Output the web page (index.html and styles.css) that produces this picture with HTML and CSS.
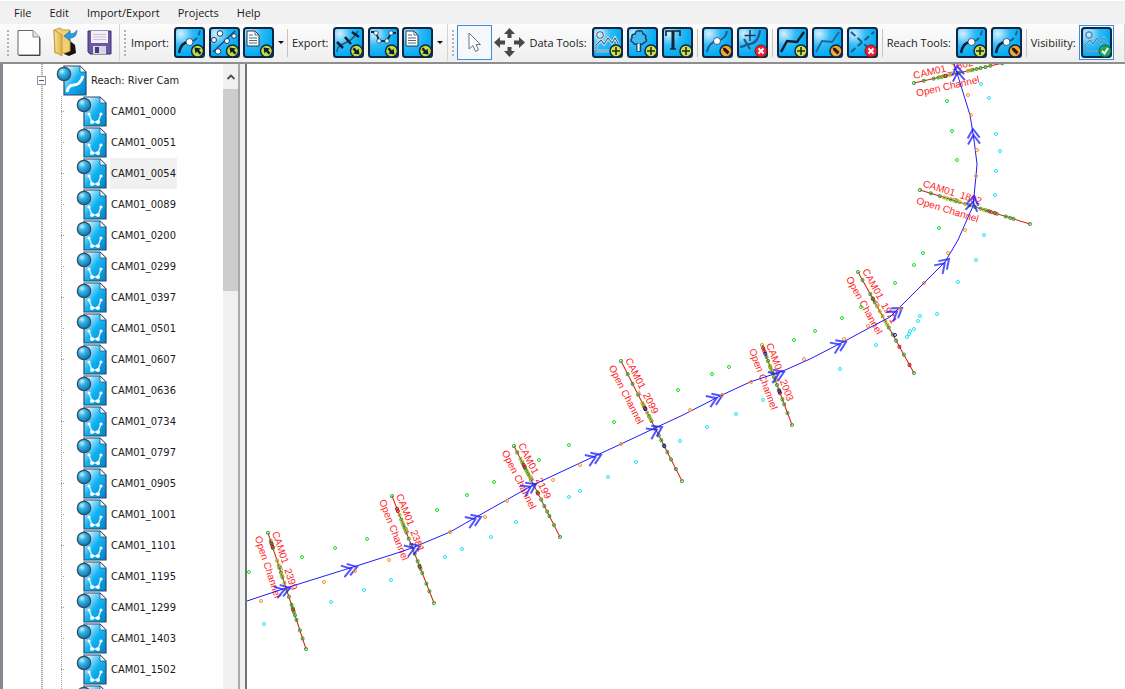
FILE: index.html
```html
<!DOCTYPE html>
<html lang="en">
<head>
    <meta charset="UTF-8">
    <meta name="viewport" content="width=device-width, initial-scale=1.0">
    <title>River Cam</title>
    <link rel="stylesheet" href="styles.css">
</head>
<body>
    <!-- shared icon parts -->
    <svg class="defs" width="0" height="0" aria-hidden="true">
        <defs>
            <radialGradient id="sky" cx="0.2" cy="0.2" r="0.8">
                <stop offset="0" stop-color="#d4efff"/>
                <stop offset="0.5" stop-color="#30bbf7"/>
                <stop offset="1" stop-color="#00aaf0"/>
            </radialGradient>
            <linearGradient id="sheet" x1="0" y1="0" x2="1" y2="1">
                <stop offset="0.1" stop-color="#dff5ff"/>
                <stop offset="0.5" stop-color="#12b4f4"/>
                <stop offset="1" stop-color="#0080c8"/>
            </linearGradient>
            <radialGradient id="ball" cx="0.35" cy="0.3" r="0.7">
                <stop offset="0" stop-color="#c9f0ff"/>
                <stop offset="0.4" stop-color="#35b4e6"/>
                <stop offset="1" stop-color="#0a78b4"/>
            </radialGradient>
            <linearGradient id="folder" x1="0" y1="0" x2="1" y2="0">
                <stop offset="0" stop-color="#f9e49a"/>
                <stop offset="1" stop-color="#dcb146"/>
            </linearGradient>
            <symbol id="tile" viewBox="0 0 31 31">
                <rect x="1" y="1" width="29" height="29" rx="2.5" fill="url(#sky)" stroke="#0c2748" stroke-width="2"/>
            </symbol>
            <symbol id="badge-cursor" viewBox="0 0 31 31">
                <circle cx="23.5" cy="24" r="6" fill="#c8dc3c" stroke="#0c2748" stroke-width="1.5"/>
                <path d="M20.500 20.500l6.500 1 -2 1.500 2.500 3 -2 1.500 -2.500 -3 -1.500 2z" fill="#0c1e30"/>
            </symbol>
            <symbol id="badge-out" viewBox="0 0 31 31">
                <circle cx="23.5" cy="24" r="6" fill="#c8dc3c" stroke="#0c2748" stroke-width="1.5"/>
                <path d="M26.500 27.500l-6.500 -1 2 -1.500 -2.500 -3 2 -1.500 2.500 3 1.500 -2z" fill="#0c1e30"/>
            </symbol>
            <symbol id="badge-add" viewBox="0 0 31 31">
                <circle cx="24" cy="24" r="6" fill="#d3e04a" stroke="#0c2748" stroke-width="1.5"/>
                <path d="M24 20v8M20 24h8" stroke="#1d2f1a" stroke-width="1.6"/>
            </symbol>
            <symbol id="badge-edit" viewBox="0 0 31 31">
                <circle cx="24" cy="24" r="6" fill="#f7a531" stroke="#0c2748" stroke-width="1.5"/>
                <path d="M20.500 20.500l3 .5 4 4 -2 2.500 -4 -4z" fill="#2b1a08"/>
            </symbol>
            <symbol id="badge-delete" viewBox="0 0 31 31">
                <circle cx="24" cy="24" r="6" fill="#ec2230" stroke="#7c1420" stroke-width="1"/>
                <path d="M21.500 21.500l5 5M26.500 21.500l-5 5" stroke="#fff" stroke-width="2"/>
            </symbol>
            <symbol id="badge-ok" viewBox="0 0 31 31">
                <circle cx="24" cy="24" r="6" fill="#25a558" stroke="#0f5f40" stroke-width="1"/>
                <path d="M21 24l2.500 2.500 3.500 -5.500" fill="none" stroke="#fff" stroke-width="1.800"/>
            </symbol>
            <symbol id="page-lines" viewBox="0 0 31 31">
                <path d="M4 4h8l4 4v11h-12z" fill="#fff" stroke="#22384f"/>
                <path d="M12 4v4h4M6 8h4M6 11h8M6 13.500h8M6 16h8" fill="none" stroke="#52697f"/>
            </symbol>
            <symbol id="reach-curve" viewBox="0 0 31 31">
                <path d="M5 26Q7 15 15 15" fill="none" stroke="#0c1e30" stroke-width="2.500"/>
                <path d="M19 14Q25 11 26 3" fill="none" stroke="#1b5c8c" stroke-width="1.800" stroke-dasharray="5 3"/>
                <circle cx="15.500" cy="15" r="3.500" fill="#fff" stroke="#0c2748" stroke-width=".7"/>
            </symbol>
            <symbol id="landscape" viewBox="0 0 31 31">
                <circle cx="8" cy="8" r="3.200"/>
                <path d="M4 24V18L9 13l3 4 4-6 4 5 3-5 3 5v2M4 24h15"/>
            </symbol>
            <symbol id="node-section" viewBox="0 0 31 31">
                <path d="M8 1H24L30 7V30H8z" fill="url(#sheet)" stroke="#2c4a68" stroke-width="1.200"/>
                <path d="M24 1V7H30z" fill="#eef6fb" stroke="#2c4a68" stroke-width=".7"/>
                <path d="M13 18l3 8h6l3-8" fill="none" stroke="#e4f8ff" stroke-width="1.400"/>
                <g fill="#fff"><circle cx="13" cy="18" r="1.600"/><circle cx="16" cy="26" r="2"/><circle cx="22" cy="26" r="2"/><circle cx="25" cy="18" r="1.600"/></g>
                <circle cx="8" cy="9" r="6.700" fill="url(#ball)" stroke="#3b4a5c" stroke-width="1.200"/>
            </symbol>
            <symbol id="node-reach" viewBox="0 0 31 31">
                <path d="M8 1H24L30 7V30H8z" fill="url(#sheet)" stroke="#2c4a68" stroke-width="1.200"/>
                <path d="M24 1V7H30z" fill="#eef6fb" stroke="#2c4a68" stroke-width=".7"/>
                <path d="M11 27Q12 20 18 20T27 11" fill="none" stroke="#fff" stroke-width="2.800"/>
                <circle cx="8" cy="9" r="6.700" fill="url(#ball)" stroke="#3b4a5c" stroke-width="1.200"/>
            </symbol>
        </defs>
    </svg>

    <div class="app">
        <nav class="menubar">
            <button>File</button>
            <button>Edit</button>
            <button>Import/Export</button>
            <button>Projects</button>
            <button>Help</button>
        </nav>

        <div class="toolbar">
            <div class="strip strip-file">
                <span class="grip"></span>
                <button class="tool" aria-label="New">
                    <svg viewBox="0 0 31 31"><path d="M4 3.500H19L25.500 10V28H4z" fill="#fdfdfd" stroke="#6a6a6a"/><path d="M19 3.500V10H25.500" fill="#e6e6e6" stroke="#8a8a8a"/><path d="M26 11V28.500H5" fill="none" stroke="#444"/></svg>
                </button>
                <button class="tool" aria-label="Open">
                    <svg viewBox="0 0 31 31"><path d="M20 13l6 5 1 8-7 3-5-2z" fill="#17140f"/><path d="M5 3l6-2 3 2h7v21l-5 2H6z" fill="#efd078" stroke="#c79b39"/><path d="M5 3l8 5v21l-7-4z" fill="url(#folder)" stroke="#c79b39"/><path d="M28 3q0 8-7 8v3l-6-5 6-5v3q5 0 7-4z" fill="#2d9be0" stroke="#1470b0" stroke-width=".6"/></svg>
                </button>
                <button class="tool" aria-label="Save">
                    <svg viewBox="0 0 31 31"><path d="M4 4H27V27H6L4 25z" fill="#6d55a8" stroke="#3f3468"/><path d="M7 4H24V16H7z" fill="#f3f1f8"/><path d="M9 7.500h13M9 10h13M9 12.500h13" stroke="#c9c4d8"/><path d="M9 19H22V27H9z" fill="#d7d5de"/><path d="M11 20H15V26H11z" fill="#4a3a7c"/></svg>
                </button>
            </div>

            <div class="strip">
                <span class="grip"></span>
                <span class="caption">Import:</span>
                <button class="tool" aria-label="Import reach">
                    <svg viewBox="0 0 31 31"><use href="#tile"/><use href="#reach-curve"/><use href="#badge-cursor"/></svg>
                </button>
                <button class="tool" aria-label="Import points">
                    <svg viewBox="0 0 31 31"><use href="#tile"/><path d="M4 25L26 4" stroke="#1b4c74" stroke-width="1.500"/><g fill="#fff" stroke="#1b3c5c"><circle cx="11" cy="6.500" r="2.800"/><circle cx="5" cy="13" r="2.500"/><circle cx="18" cy="14" r="2.500"/><circle cx="25" cy="9" r="2.300"/><circle cx="9" cy="24.500" r="2.800"/></g><use href="#badge-cursor"/></svg>
                </button>
                <button class="tool tool-menu" aria-label="Import file">
                    <svg viewBox="0 0 31 31"><use href="#tile"/><use href="#page-lines"/><use href="#badge-cursor"/></svg><i class="arrow"></i>
                </button>
                <span class="sep"></span>
                <span class="caption">Export:</span>
                <button class="tool" aria-label="Export sections">
                    <svg viewBox="0 0 31 31"><use href="#tile"/><path d="M4 25Q4 20 8 18T16 14T25 4" fill="none" stroke="#1b5c8c" stroke-width="1.500"/><path d="M4 15l6 6M12 10l6 7M19 5l7 5" stroke="#0c1e30" stroke-width="2.500"/><use href="#badge-out"/></svg>
                </button>
                <button class="tool" aria-label="Export cross section">
                    <svg viewBox="0 0 31 31"><use href="#tile"/><path d="M3 5h5l3 9h8l4-8h5" fill="none" stroke="#0c2748" stroke-width="1.800"/><g fill="#fff" stroke="#1b3c5c" stroke-width=".8"><circle cx="8" cy="6" r="2.200"/><circle cx="11" cy="14" r="2.200"/><circle cx="19" cy="14" r="2.200"/><circle cx="23" cy="6" r="2.200"/></g><use href="#badge-out"/></svg>
                </button>
                <button class="tool tool-menu" aria-label="Export file">
                    <svg viewBox="0 0 31 31"><use href="#tile"/><use href="#page-lines"/><use href="#badge-out"/></svg><i class="arrow"></i>
                </button>
            </div>

            <div class="strip strip-last">
                <span class="grip"></span>
                <button class="tool tool-on" aria-label="Select" aria-pressed="true">
                    <svg viewBox="0 0 31 31"><path d="M10 6V22L14 18.500L16.500 24.500L19.500 23L17 17.500H21.500z" fill="#fff" stroke="#6a7683"/></svg>
                </button>
                <button class="tool" aria-label="Pan">
                    <svg viewBox="0 0 31 31"><path d="M15.500 1L21 7H17.500V11H13.500V7H10zM15.500 30L21 24H17.500V20H13.500V24H10zM0 15.500L6 10V13.500H11V17.500H6V21zM31 15.500L25 10V13.500H20V17.500H25V21z" fill="#484848"/></svg>
                </button>
                <span class="caption">Data Tools:</span>
                <button class="tool" aria-label="Add image">
                    <svg viewBox="0 0 31 31"><use href="#tile"/><use href="#landscape" fill="none" stroke="#f4fbff" stroke-width="2.500"/><use href="#landscape" fill="none" stroke="#3f5a73" stroke-width="1.100"/><use href="#badge-add"/></svg>
                </button>
                <button class="tool" aria-label="Add tree">
                    <svg viewBox="0 0 31 31"><use href="#tile"/><path d="M10 24V17Q7 18 6 15.500Q2 14 5 11Q4 7 8 7Q9 3 12 4Q16 3 16 7Q20 8 18.500 11Q21 15 17 15.500Q16 18 13.500 17V24z" fill="#40b9ef" stroke="#143f66" stroke-width="1.500"/><path d="M11.500 17v7" stroke="#fff" stroke-width="2"/><use href="#badge-add"/></svg>
                </button>
                <button class="tool" aria-label="Add text">
                    <svg viewBox="0 0 31 31"><use href="#tile"/><path d="M4 9V4H18V9M8 22H14" fill="none" stroke="#10243a" stroke-width="1.600"/><path d="M11 4V22" stroke="#10243a" stroke-width="3"/><use href="#badge-add"/></svg>
                </button>
                <span class="sep"></span>
                <button class="tool" aria-label="Edit point">
                    <svg viewBox="0 0 31 31"><use href="#tile"/><path d="M5 25Q7 15 15 14Q24 12 25 4" fill="none" stroke="#1b5c8c" stroke-width="2"/><circle cx="15" cy="14" r="3.500" fill="#fff" stroke="#0c2748" stroke-width=".7"/><use href="#badge-edit"/></svg>
                </button>
                <button class="tool" aria-label="Delete point">
                    <svg viewBox="0 0 31 31"><use href="#tile"/><path d="M3 20Q7 20 10 17Q21 18 23 3M7 12l6 10" fill="none" stroke="#1b5c8c" stroke-width="2.200"/><path d="M13 3V14M7.500 8.500H18.500" stroke="#123a60" stroke-width="1.500"/><use href="#badge-delete"/></svg>
                </button>
                <span class="sep"></span>
                <button class="tool" aria-label="Add line">
                    <svg viewBox="0 0 31 31"><use href="#tile"/><path d="M4 25L10 14L20 15L27 5" fill="none" stroke="#0c1e30" stroke-width="2.500"/><use href="#badge-add"/></svg>
                </button>
                <button class="tool" aria-label="Edit line">
                    <svg viewBox="0 0 31 31"><use href="#tile"/><path d="M4 25L10 14L20 15L27 5" fill="none" stroke="#1f6796" stroke-width="1.800"/><use href="#badge-edit"/></svg>
                </button>
                <button class="tool" aria-label="Delete line">
                    <svg viewBox="0 0 31 31"><use href="#tile"/><path d="M4 5L27 26M4 25L27 5" stroke="#1b5c8c" stroke-width="2" stroke-dasharray="6 3"/><use href="#badge-delete"/></svg>
                </button>
                <span class="sep"></span>
                <span class="caption">Reach Tools:</span>
                <button class="tool" aria-label="Add reach">
                    <svg viewBox="0 0 31 31"><use href="#tile"/><use href="#reach-curve"/><use href="#badge-add"/></svg>
                </button>
                <button class="tool" aria-label="Edit reach">
                    <svg viewBox="0 0 31 31"><use href="#tile"/><use href="#reach-curve"/><use href="#badge-edit"/></svg>
                </button>
                <span class="sep"></span>
                <span class="caption">Visibility:</span>
                <button class="tool tool-on" aria-label="Show image" aria-pressed="true">
                    <svg viewBox="0 0 31 31"><use href="#tile"/><use href="#landscape" fill="none" stroke="#8fc9e8" stroke-width="2"/><use href="#landscape" fill="none" stroke="#3a7aa5" stroke-width="1"/><use href="#badge-ok"/></svg>
                </button>
            </div>
        </div>

        <main class="workspace">
            <aside class="sidebar">
                <div class="tree">
                    <div class="reach">
                        <button class="expander" aria-label="Collapse"></button>
                        <svg class="node-icon" viewBox="0 0 31 31"><use href="#node-reach"/></svg>
                        <span class="node-label">Reach: River Cam</span>
                    </div>
                    <ul class="sections" id="sections"></ul>
                </div>
                <div class="scrollbar">
                    <button class="scroll-up" aria-label="Scroll up"><svg viewBox="0 0 10 10"><path d="M1.500 7L5 3.500L8.500 7" fill="none" stroke="#505050" stroke-width="1.800"/></svg></button>
                    <div class="thumb"></div>
                </div>
            </aside>
            <div class="map">
                <svg width="100%" height="100%">
                    <!-- drawing uses window coordinates -->
                    <g id="plan" transform="translate(-247 -64)"></g>
                </svg>
            </div>
        </main>
    </div>
    <script src="script.js"></script>
</body>
</html>
```
FILE: styles.css
```css
* {
    box-sizing: border-box;
}

body {
    margin: 0;
    font-family: "Open Sans", "Noto Sans", sans-serif;
    font-size: 11px;
    color: #1a1a1a;
    background-color: #f0f0f0;
}

button {
    margin: 0;
    padding: 0;
    border: none;
    background: none;
    font: inherit;
    color: inherit;
}

.defs {
    position: absolute;
}

.app {
    display: flex;
    flex-direction: column;
    height: 100vh;
    overflow: hidden;
}

/* menu */
.menubar {
    display: flex;
    height: 24px;
    padding-left: 5px;
    border-top: 1px solid #fff;
    background-color: #f1f1f1;
}

.menubar button {
    padding: 0 9px;
}

/* toolbar */
.toolbar {
    display: flex;
    height: 40px;
    border-bottom: 2px solid #8e8e8e;
    background-color: #f0f0f0;
}

.strip {
    display: flex;
    align-items: center;
    height: 37px;
    padding: 0 3px 0 4px;
    border-right: 1px solid #d4d4d4;
    background: linear-gradient(#fcfcfc, #efefef);
    white-space: nowrap;
}

.strip-file {
    padding: 0 2px 0 7px;
}

.strip-last {
    flex: 1;
}

.grip {
    width: 2px;
    height: 26px;
    margin-right: 3px;
    background: repeating-linear-gradient(#b4b4b4 0 2px, transparent 2px 4px);
}

.caption {
    padding: 0 3px 0 2px;
}

.tool {
    flex: none;
    display: flex;
    align-items: center;
    justify-content: center;
    width: 35px;
    height: 35px;
}

.tool svg {
    flex: none;
    width: 31px;
    height: 31px;
}

.tool-on {
    border: 1px solid #3c8edb;
    background-color: #f5f9fd;
}

.tool-menu {
    width: 43px;
}

.arrow {
    margin-left: 4px;
    border: 3px solid transparent;
    border-top-color: #111;
    border-bottom: none;
}

.sep {
    width: 1px;
    height: 28px;
    margin: 0 2px;
    background-color: #c4c4c4;
}

/* tree on the left */
.workspace {
    flex: 1;
    display: flex;
    min-height: 0;
}

.sidebar {
    display: flex;
    width: 240px;
    border-left: 3px solid #868a90;
    border-right: 2px solid #a6a9ad;
    background-color: #fff;
}

.tree {
    flex: 1;
    overflow: hidden;
    padding: 1px 0 0 38px;
    background: repeating-linear-gradient(#b4b4b4 0 1px, #e8e8e8 1px 2px) 38px 0 / 2px 100% no-repeat;
    font-family: "DejaVu Sans Condensed", "DejaVu Sans", sans-serif;
}

.reach,
.sections li {
    display: flex;
    align-items: center;
    height: 31px;
}

.reach {
    margin-left: -4px;
}

.expander {
    width: 9px;
    height: 9px;
    margin-right: 10px;
    border: 1px solid #919191;
    background: linear-gradient(#3c5a9c, #3c5a9c) center / 5px 1px no-repeat #fff;
}

.node-icon {
    flex: none;
    width: 31px;
    height: 31px;
}

.node-label {
    padding: 0 1px;
    line-height: 31px;
    margin-left: 3px;
    white-space: nowrap;
}

.sections {
    margin: 0 0 0 20px;
    padding: 0;
    list-style: none;
    background: repeating-linear-gradient(#a0a0a0 0 1px, transparent 1px 2px) 0 0 / 1px 100% no-repeat;
}

.sections li::before {
    content: "";
    width: 3px;
    margin-right: 12px;
    border-top: 1px dotted #a0a0a0;
}

.selected .node-label {
    background-color: #f0f0f0;
}

.scrollbar {
    width: 15px;
    background-color: #f0f0f0;
}

.scroll-up {
    display: flex;
    align-items: center;
    justify-content: center;
    width: 100%;
    height: 25px;
}

.scroll-up svg {
    width: 10px;
    height: 10px;
}

.thumb {
    height: 202px;
    background-color: #cdcdcd;
}

/* plan view */
.map {
    flex: 1;
    min-width: 0;
    margin-left: 5px;
    border-left: 2px solid #6e7175;
    background-color: #fff;
}

.map svg {
    display: block;
}

.map text {
    font-family: "Liberation Sans", Arial, sans-serif;
    font-size: 10px;
    fill: #ff1c1c;
}

.river,
.flow {
    fill: none;
    stroke: #1c1cff;
}

.flow {
    stroke-width: 2;
    opacity: 0.75;
}

.section-line {
    stroke: #e61414;
}

.point {
    fill: none;
    stroke-width: 1;
}

.green { stroke: #14e014; }
.bank { stroke: #2ea82e; }
.cyan { stroke: #1ce6f5; }
.orange { stroke: #ff8c1c; }
.lime { stroke: #9cba1c; }
.red { stroke: #b41e1e; }
.navy { stroke: #1414a0; }
```
FILE: script.js
```javascript
const nodes = ['0000', '0051', '0054', '0089', '0200', '0299', '0397', '0501', '0607', '0636', '0734',
    '0797', '0905', '1001', '1101', '1195', '1299', '1403', '1502', '1602'];

document.getElementById('sections').innerHTML = nodes.map(n =>
    `<li class="${n === '0054' ? 'selected' : ''}">
        <svg class="node-icon" viewBox="0 0 31 31"><use href="#node-section"/></svg>
        <span class="node-label">CAM01_${n}</span>
    </li>`).join('');

const river = [[247, 601], [286, 588], [350, 568], [394, 554], [412, 548], [419, 545], [450, 532], [478, 516],
    [533, 485], [580, 463], [621, 444], [655, 428], [683, 415], [722, 395], [750, 382], [783, 371], [810, 359],
    [845, 341], [869, 328], [890, 317], [901, 306], [924, 283], [945, 262], [958, 240], [973, 206], [976, 176],
    [977, 164], [974, 140], [970, 115], [957, 73], [953, 60]];

// tip x, tip y, heading
const flow = [[290, 588, -17], [357, 567, -17], [420, 546, -20], [481, 517, -22], [536, 484, -27], [601, 455, -22],
    [662, 427, -27], [722, 396, -22], [784, 372, -22], [846, 342, -24], [902, 308, -35], [949, 259, -45],
    [974, 196, -80], [973, 129, -94], [957, 66, -97]];

// each section: ends, then the surveyed points as percent along the line
const sections = [
    { id: 'CAM01_2399', line: [268, 533, 306, 649], bank: [0, 7, 10, 13, 30, 34, 38, 55, 62, 65, 68, 71, 75, 84, 91, 100], lime: [24, 28, 36, 43, 49], red: [9, 12, 66] },
    { id: 'CAM01_2381', line: [392, 496, 434, 603], bank: [0, 22, 27, 30, 34, 40, 46, 54, 61, 65, 68, 72, 82, 89, 100], lime: [18, 25, 32], red: [12, 14, 66] },
    { id: 'CAM01_2199', line: [514, 446, 560, 537], bank: [0, 7, 18, 24, 27, 31, 37, 43, 51, 59, 66, 72, 77, 87, 100], lime: [14, 29, 34], red: [21, 23, 52] },
    { id: 'CAM01_2099', line: [621, 361, 682, 481], bank: [0, 11, 19, 28, 37, 46, 50, 56, 62, 66, 70, 76, 82, 90, 100], lime: [35, 38, 43, 48], navy: [40, 71], red: [39] },
    { id: 'CAM01_2003', line: [762, 345, 792, 425], bank: [15, 20, 28, 34, 40, 50, 56, 68, 74, 85, 100], lime: [0, 26, 31, 37, 45], navy: [11, 58], red: [4, 8, 60] },
    { id: 'CAM01_1971', line: [858, 272, 914, 373], bank: [0, 8, 22, 26, 30, 55, 62, 68, 82, 100], lime: [34, 39, 44, 49, 52], red: [27, 74, 92] },
    { id: 'CAM01_1892', line: [920, 190, 1030, 224], bank: [0, 10, 18, 28, 33, 45, 50, 55, 60, 65, 70, 78, 82, 85, 100], lime: [22, 25, 31, 36, 41, 58], red: [63, 68] },
    { id: 'CAM01_1802', line: [914, 83, 1012, 61], bank: [0, 10, 20, 25, 29, 33, 46, 60, 64, 68, 73, 78, 90], lime: [27, 31, 37, 43, 55, 58], red: [32] }
];

const points = {
    green: [[249, 572], [302, 557], [335, 548], [367, 539], [437, 510], [467, 495], [494, 482], [539, 460],
        [569, 445], [614, 422], [678, 390], [712, 374], [729, 367], [794, 340], [815, 331], [842, 318], [861, 307],
        [895, 283], [914, 265], [923, 253], [939, 228], [957, 160], [952, 131], [947, 101]],
    orange: [[261, 601], [324, 582], [355, 571], [389, 560], [420, 544], [450, 532], [485, 517], [507, 501],
        [553, 480], [580, 465], [621, 444], [690, 410], [722, 395], [751, 382], [804, 359], [844, 339], [868, 326],
        [900, 309], [924, 283], [948, 253], [965, 230], [976, 176], [977, 150], [971, 115], [968, 95]],
    cyan: [[264, 624], [331, 602], [364, 590], [391, 580], [445, 557], [462, 549], [491, 537], [516, 522],
        [569, 497], [580, 491], [608, 477], [636, 462], [680, 441], [707, 427], [736, 414], [763, 400], [840, 369],
        [876, 345], [907, 337], [909, 334], [910, 331], [914, 329], [918, 321], [920, 316], [937, 314], [958, 282],
        [976, 260], [984, 235], [995, 195], [996, 171], [1000, 151], [996, 134], [989, 98], [981, 84]],
    navy: [[895, 335]]
};

function circle(x, y, cls) {
    return `<circle class="point ${cls}" cx="${x}" cy="${y}" r="1.5"/>`;
}

function drawSection(s) {
    const [x1, y1, x2, y2] = s.line;
    const angle = Math.atan2(y2 - y1, x2 - x1) * 180 / Math.PI;
    const length = Math.hypot(x2 - x1, y2 - y1);
    const marks = ['bank', 'lime', 'red', 'navy'].map(cls =>
        (s[cls] || []).map(p => circle(length * p / 100, 0, cls)).join('')).join('');
    return `<g transform="translate(${x1} ${y1}) rotate(${angle})">
        <text x="1" y="-4">${s.id}</text>
        <text x="0" y="14">Open Channel</text>
        <line class="section-line" x2="${length}"/>
        ${marks}
    </g>`;
}

let plan = sections.map(drawSection).join('');
plan += `<polyline class="river" points="${river.join(' ')}"/>`;
plan += flow.map(([x, y, a]) =>
    `<path class="flow" transform="translate(${x} ${y}) rotate(${a})" d="M-9 -6L0 0L-9 6M-15 -6L-6 0L-15 6"/>`).join('');
for (const cls in points) {
    plan += points[cls].map(([x, y]) => circle(x, y, cls)).join('');
}
document.getElementById('plan').innerHTML = plan;
```
